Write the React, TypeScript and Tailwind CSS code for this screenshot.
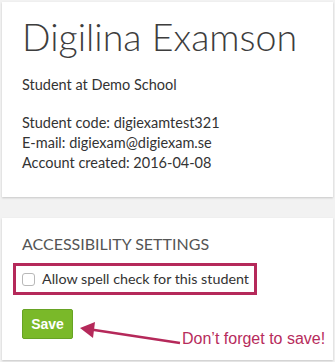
import React from "react";

export default function App() {
  return (
    <div className="w-[335px] h-[362px] bg-[#f2f2f2] p-[2px] overflow-hidden" style={{ fontFamily: "Lato, 'Noto Sans', sans-serif" }}>
      <div className="bg-white shadow-[0_1px_2px_rgba(0,0,0,0.18)] pl-[20px] pt-[16px] pb-[23px] h-[195px]">
        <h1 className="text-[37.6px] leading-[38px] font-light text-[#3d3d3d]">Digilina Examson</h1>
        <p className="mt-[19px] text-[14.5px] leading-[20px] text-[#333]">Student at Demo School</p>
        <div className="mt-[18px] text-[14.5px] leading-[20px] text-[#333]">
          <p>Student code: digiexamtest321</p>
          <p>E-mail: digiexam@digiexam.se</p>
          <p>Account created: 2016-04-08</p>
        </div>
      </div>
      <div className="mt-[21px] bg-white shadow-[0_1px_2px_rgba(0,0,0,0.18)] pl-[20px] pt-[16px] h-[142px] relative">
        <h2 className="text-[16px] leading-[20px] text-[#555]">ACCESSIBILITY SETTINGS</h2>
        <div className="mt-[9px] -ml-[9px] w-[244px] h-[32px] border-[3px] border-[#b5295a] flex items-center pl-[6px]">
          <div className="w-[13px] h-[13px] rounded-[3px] border border-[#b8b8b8] bg-white shrink-0" />
          <span className="ml-[7px] text-[14.3px] text-[#333]">Allow spell check for this student</span>
        </div>
        <div className="mt-[14px] flex items-start">
          <button className="w-[51px] h-[30px] rounded-[2px] bg-[#7ab929] border border-[#67a324] text-white font-bold text-[14px]" style={{ fontFamily: "'Liberation Sans', Arial, sans-serif" }}>
            Save
          </button>
        </div>
        <svg className="absolute left-[75px] top-[100px]" width="110" height="30" viewBox="0 0 110 30">
          <line x1="14" y1="11.5" x2="103" y2="25" stroke="#b5295a" strokeWidth="2.6" />
          <polygon points="3,10 18,4 16,20" fill="#b5295a" />
        </svg>
        <span className="absolute left-[180px] top-[111px] text-[16px] leading-[20px] text-[#b72c5c]" style={{ fontFamily: "'Liberation Sans', Arial, sans-serif" }}>
          Don’t forget to save!
        </span>
      </div>
    </div>
  );
}
